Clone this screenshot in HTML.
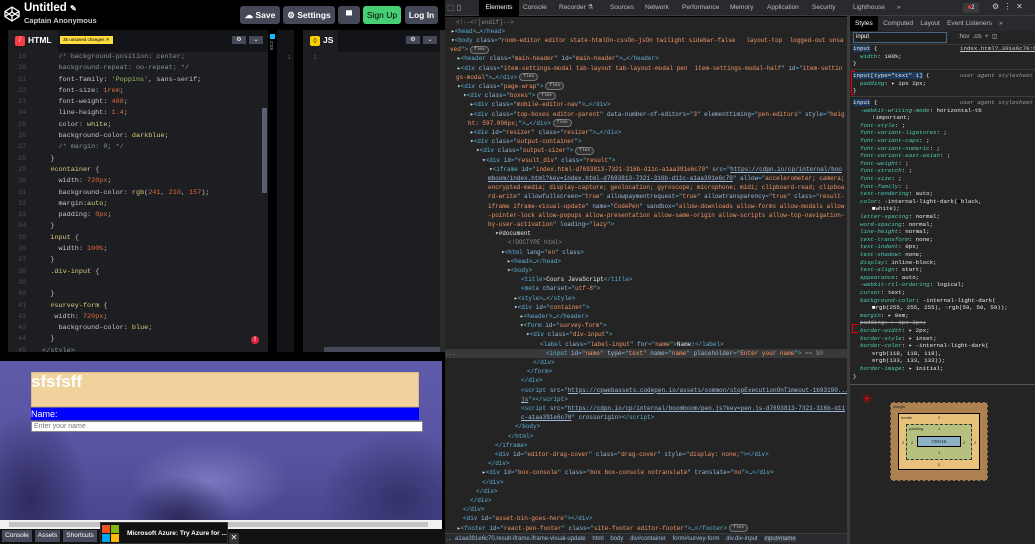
<!DOCTYPE html>
<html><head><meta charset="utf-8"><style>
*{margin:0;padding:0;box-sizing:border-box}
body{width:1035px;height:544px;overflow:hidden;background:#000;font-family:"Liberation Sans",sans-serif;position:relative}
.a{position:absolute}
.mono{font-family:"Liberation Mono",monospace}
.btn{position:absolute;top:6px;height:18px;background:#444857;color:#fff;font-size:8.5px;border-radius:3px;display:flex;align-items:center;justify-content:center;font-weight:bold}
.code{position:absolute;left:8px;top:52px;width:260px;height:300px;background:#1d1e22;font-family:"Liberation Mono",monospace;font-size:6.8px;color:#c5c8c6;overflow:hidden}
.code div{height:11.3px;line-height:11.3px;white-space:pre}
.code .ln{display:inline-block;width:26px;color:#4a4d55;text-align:left;padding-left:10px}
.k{color:#ddca7e}.o{color:#e2693d}.g{color:#a0c25f}.c{color:#8a8e99}
#el{position:absolute;left:445px;top:17px;width:402px;height:516px;background:#242424;overflow:hidden;font-family:"Liberation Mono",monospace;font-size:6px;color:#e8eaed}
#el div{position:absolute;height:9.2px;line-height:9.2px;white-space:pre}
.t{color:#5db0d7}.n{color:#9bbbdc}.v{color:#f29766}.u{color:#9bbbdc;text-decoration:underline}.cm{color:#898989}
.fl{display:inline-block;border:1px solid #777;border-radius:5px;font-size:4.5px;padding:0 3px;line-height:6px;color:#ccc;margin-left:2px;vertical-align:middle;background:#333}
#st{position:absolute;left:850px;top:45px;width:185px;height:499px;background:#242424;font-family:"Liberation Mono",monospace;font-size:5.8px;color:#e8eaed;overflow:hidden}
#st div{position:absolute;white-space:pre;height:7.6px;line-height:7.6px}
.p{color:#4ec9b0;font-style:italic}.pn{color:#4ec9b0}
.tab{position:absolute;top:0;height:16px;line-height:16px;font-size:6.5px;color:#bbb}
</style></head><body>
<!-- header -->
<div class="a" style="left:0;top:0;width:445px;height:30px;background:#000"></div>
<svg class="a" style="left:4px;top:6px" width="16" height="16" viewBox="0 0 16 16"><g fill="none" stroke="#fff" stroke-width="1.3"><path d="M8 1L15 5.5V10.5L8 15L1 10.5V5.5Z"/><path d="M1 5.5L8 10L15 5.5M8 1V6L1 10.5M8 6L15 10.5M8 10V15"/></g></svg>
<div class="a" style="left:24px;top:2px;color:#fff;font-size:11.5px;font-weight:bold">Untitled <span style="font-size:8px">✎</span></div>
<div class="a" style="left:24px;top:16px;color:#ccc;font-size:7.5px;font-weight:bold">Captain Anonymous</div>
<div class="btn" style="left:240px;width:40px">☁ Save</div>
<div class="btn" style="left:283px;width:52px">⚙ Settings</div>
<div class="btn" style="left:338px;width:22px">▀</div>
<div class="btn" style="left:363px;width:38px;background:#47cf73;color:#000;font-weight:normal">Sign Up</div>
<div class="btn" style="left:405px;width:33px">Log In</div>
<!-- editors -->
<div class="a" style="left:8px;top:30px;width:260px;height:22px;background:#131417"></div>
<div class="a" style="left:8px;top:30px;width:50px;height:22px;background:#1d1e22"></div>
<div class="a" style="left:15px;top:36px;width:10px;height:10px;background:#ff3c41;border-radius:2px;color:#fff;font-size:7px;text-align:center;line-height:10px">/</div>
<div class="a" style="left:28px;top:35px;color:#fff;font-size:8.5px;font-weight:bold">HTML</div>
<div class="a" style="left:60px;top:36px;background:#ffdd40;color:#000;font-size:4.5px;padding:1px 3px">35 unsaved changes ✕</div>
<div class="a" style="left:232px;top:36px;width:14px;height:8px;background:#444857;color:#fff;font-size:6px;text-align:center;line-height:8px">⚙</div>
<div class="a" style="left:249px;top:36px;width:14px;height:8px;background:#444857;color:#fff;font-size:6px;text-align:center;line-height:8px">⌄</div>
<div class="a" style="left:268px;top:30px;width:9px;height:322px;background:#000"></div>
<div class="a" style="left:270px;top:34px;width:5px;height:5px;background:#0ebeff"></div>
<div class="a" style="left:269px;top:41px;color:#aaa;font-size:4.5px;writing-mode:vertical-rl">CSS</div>
<div class="a" style="left:277px;top:30px;width:17px;height:322px;background:#131417"></div>
<div class="a" style="left:294px;top:30px;width:9px;height:322px;background:#000"></div>
<div class="a" style="left:303px;top:30px;width:137px;height:322px;background:#1d1e22"></div>
<div class="a" style="left:338px;top:30px;width:102px;height:22px;background:#131417"></div>
<div class="a" style="left:310px;top:36px;width:10px;height:10px;background:#fcd000;border-radius:2px;color:#000;font-size:5px;text-align:center;line-height:10px">()</div>
<div class="a" style="left:323px;top:35px;color:#fff;font-size:8.5px;font-weight:bold">JS</div>
<div class="a" style="left:406px;top:36px;width:14px;height:8px;background:#444857;color:#fff;font-size:6px;text-align:center;line-height:8px">⚙</div>
<div class="a" style="left:423px;top:36px;width:14px;height:8px;background:#444857;color:#fff;font-size:6px;text-align:center;line-height:8px">⌄</div>
<div class="a mono" style="left:287px;top:54px;color:#4a4d55;font-size:6.8px">1</div>
<div class="a mono" style="left:313px;top:54px;color:#4a4d55;font-size:6.8px">1</div>
<div class="a" style="left:440px;top:30px;width:5px;height:322px;background:#2c2c2c"></div>
<div class="a" style="left:324px;top:347px;width:116px;height:5px;background:#444857"></div>
<div class="code">
<div><span class="ln">19</span>      <span class="c">/* background-position: center;</span></div>
<div><span class="ln">20</span>      <span class="c">background-repeat: no-repeat; */</span></div>
<div><span class="ln">21</span>      font-family: <span class="g">'Poppins'</span>, sans-serif;</div>
<div><span class="ln">22</span>      font-size: <span class="o">1rem</span>;</div>
<div><span class="ln">23</span>      font-weight: <span class="o">400</span>;</div>
<div><span class="ln">24</span>      line-height: <span class="o">1.4</span>;</div>
<div><span class="ln">25</span>      color: <span class="k">white</span>;</div>
<div><span class="ln">26</span>      background-color: <span class="k">darkblue</span>;</div>
<div><span class="ln">27</span>      <span class="c">/* margin: 0; */</span></div>
<div><span class="ln">28</span>    }</div>
<div><span class="ln">29</span>    <span class="k">#container</span> {</div>
<div><span class="ln">30</span>      width: <span class="o">720px</span>;</div>
<div><span class="ln">31</span>      background-color: <span class="k">rgb</span>(<span class="o">241</span>, <span class="o">210</span>, <span class="o">157</span>);</div>
<div><span class="ln">32</span>      margin:<span class="k">auto</span>;</div>
<div><span class="ln">33</span>      padding: <span class="o">0px</span>;</div>
<div><span class="ln">34</span>    }</div>
<div><span class="ln">35</span>    <span class="k">input</span> {</div>
<div><span class="ln">36</span>      width: <span class="o">100%</span>;</div>
<div><span class="ln">37</span>    }</div>
<div><span class="ln">38</span>    <span class="k">.div-input</span> {</div>
<div><span class="ln">39</span></div>
<div><span class="ln">40</span>    }</div>
<div><span class="ln">41</span>    <span class="k">#survey-form</span> {</div>
<div><span class="ln">42</span>     width: <span class="o">720px</span>;</div>
<div><span class="ln">43</span>      background-color: <span class="k">blue</span>;</div>
<div><span class="ln">44</span>    }</div>
<div><span class="ln">45</span>  <span class="c">&lt;/style&gt;</span></div>
</div>
<div class="a" style="left:262px;top:108px;width:5px;height:85px;background:#5a5f73"></div>
<div class="a" style="left:251px;top:336px;width:8px;height:8px;border-radius:50%;background:#e0273c;color:#fff;font-size:6px;text-align:center;line-height:8px;font-weight:bold">!</div>
<!-- result -->
<div class="a" style="left:0;top:352px;width:445px;height:10px;background:#000"></div>
<div class="a" style="left:0;top:361px;width:442px;height:159px;background:radial-gradient(ellipse 60px 90px at 30px 140px,#2e2c5e 0,transparent 100%),radial-gradient(ellipse 55px 45px at 180px 160px,#2c2a58 0,transparent 100%),radial-gradient(ellipse 80px 70px at 400px 140px,#34326a 0,transparent 100%),radial-gradient(ellipse 80px 40px at 210px 120px,#7b78c0 0,transparent 100%),linear-gradient(180deg,#5f5bab,#5753a0 60%,#4a4690)"></div>
<div class="a" style="left:31px;top:372px;width:388px;height:35px;background:#f1d29d;border:1px solid #d8bb88"></div>
<div class="a" style="left:31px;top:372px;color:#fff;font-size:17px;font-weight:bold">sfsfsff</div>
<div class="a" style="left:31px;top:408px;width:388px;height:12px;background:#0000ff;color:#fff;font-size:9px;line-height:12px">Name:</div>
<div class="a" style="left:31px;top:421px;width:392px;height:11px;background:#fff;border:1px solid #888;color:#777;font-size:7px;line-height:9px;padding-left:2px">Enter your name</div>
<div class="a" style="left:0;top:520px;width:442px;height:9px;background:#f0f0f0"></div>
<div class="a" style="left:9px;top:522px;width:419px;height:5px;background:#c4c4c4"></div>
<div class="a" style="left:0;top:529px;width:445px;height:15px;background:#111"></div>
<div class="a" style="left:2px;top:530px;width:30px;height:12px;background:#444857;color:#fff;font-size:6.5px;text-align:center;line-height:12px">Console</div>
<div class="a" style="left:35px;top:530px;width:25px;height:12px;background:#444857;color:#fff;font-size:6.5px;text-align:center;line-height:12px">Assets</div>
<div class="a" style="left:63px;top:530px;width:34px;height:12px;background:#444857;color:#fff;font-size:6.5px;text-align:center;line-height:12px">Shortcuts</div>
<div class="a" style="left:100px;top:522px;width:128px;height:22px;background:#111;border:1px solid #333"></div>
<div class="a" style="left:102px;top:525px;width:8px;height:8px;background:#f25022"></div><div class="a" style="left:111px;top:525px;width:8px;height:8px;background:#7fba00"></div>
<div class="a" style="left:102px;top:534px;width:8px;height:8px;background:#00a4ef"></div><div class="a" style="left:111px;top:534px;width:8px;height:8px;background:#ffb900"></div>
<div class="a" style="left:127px;top:530px;color:#fff;font-size:6.5px;font-weight:bold">Microsoft Azure: Try Azure for ...</div>
<div class="a" style="left:229px;top:533px;width:10px;height:11px;background:#333;color:#fff;font-size:8px;text-align:center">✕</div>
<!-- devtools top -->
<div class="a" style="left:445px;top:0;width:590px;height:16px;background:#292a2d;border-bottom:1px solid #3c3c3c"></div>
<div class="a" style="left:447px;top:3px;color:#aaa;font-size:8px">⬚ ▯</div>
<div class="a" style="left:479px;top:0;width:40px;height:16px;background:#000;color:#fff;font-size:6.5px;text-align:center;line-height:16px">Elements</div>
<div class="tab" style="left:523px">Console</div>
<div class="tab" style="left:559px">Recorder ⚗</div>
<div class="tab" style="left:610px">Sources</div>
<div class="tab" style="left:645px">Network</div>
<div class="tab" style="left:682px">Performance</div>
<div class="tab" style="left:730px">Memory</div>
<div class="tab" style="left:767px">Application</div>
<div class="tab" style="left:812px">Security</div>
<div class="tab" style="left:853px">Lighthouse</div>
<div class="tab" style="left:897px">»</div>
<div class="a" style="left:963px;top:3px;width:16px;height:10px;background:#3a3a3a;color:#fff;font-size:6px;line-height:10px;text-align:center"><span style="color:#e33">■</span>2</div>
<div class="a" style="left:992px;top:2px;color:#ccc;font-size:8px;white-space:pre">⚙  ⋮  ✕</div>
<div id="el">
<div style="left:11px;top:0.6px" class="cm">&lt;!--&lt;![endif]--&gt;</div>
<div style="left:6px;top:9.8px">▸<span class="t">&lt;head&gt;</span>…<span class="t">&lt;/head&gt;</span></div>
<div style="left:6px;top:19px">▾<span class="t">&lt;body </span><span class="n">class</span><span class="t">="</span><span class="v">room-editor editor state-htmlOn-cssOn-jsOn twilight sidebar-false   layout-top  logged-out unsa</span></div>
<div style="left:5px;top:28.2px"><span class="v">ved</span><span class="t">"&gt;</span><span class="fl">flex</span></div>
<div style="left:12px;top:37.4px">▸<span class="t">&lt;header </span><span class="n">class</span><span class="t">="</span><span class="v">main-header</span><span class="t">" </span><span class="n">id</span><span class="t">="</span><span class="v">main-header</span><span class="t">"&gt;</span>…<span class="t">&lt;/header&gt;</span></div>
<div style="left:12px;top:46.6px">▸<span class="t">&lt;div </span><span class="n">class</span><span class="t">="</span><span class="v">item-settings-modal tab-layout tab-layout-modal pen  item-settings-modal-half</span><span class="t">" </span><span class="n">id</span><span class="t">="</span><span class="v">item-settin</span></div>
<div style="left:11px;top:55.8px"><span class="v">gs-modal</span><span class="t">"&gt;</span>…<span class="t">&lt;/div&gt;</span><span class="fl">flex</span></div>
<div style="left:12px;top:65px">▾<span class="t">&lt;div </span><span class="n">class</span><span class="t">="</span><span class="v">page-wrap</span><span class="t">"&gt;</span><span class="fl">flex</span></div>
<div style="left:18px;top:74.2px">▾<span class="t">&lt;div </span><span class="n">class</span><span class="t">="</span><span class="v">boxes</span><span class="t">"&gt;</span><span class="fl">flex</span></div>
<div style="left:25px;top:83.4px">▸<span class="t">&lt;div </span><span class="n">class</span><span class="t">="</span><span class="v">mobile-editor-nav</span><span class="t">"&gt;</span>…<span class="t">&lt;/div&gt;</span></div>
<div style="left:25px;top:92.6px">▸<span class="t">&lt;div </span><span class="n">class</span><span class="t">="</span><span class="v">top-boxes editor-parent</span><span class="t">" </span><span class="n">data-number-of-editors</span><span class="t">="</span><span class="v">3</span><span class="t">" </span><span class="n">elementtiming</span><span class="t">="</span><span class="v">pen-editors</span><span class="t">" </span><span class="n">style</span><span class="t">="</span><span class="v">heig</span></div>
<div style="left:23px;top:101.8px"><span class="v">ht: 597.006px;</span><span class="t">"&gt;</span>…<span class="t">&lt;/div&gt;</span><span class="fl">flex</span></div>
<div style="left:25px;top:111px">▸<span class="t">&lt;div </span><span class="n">id</span><span class="t">="</span><span class="v">resizer</span><span class="t">" </span><span class="n">class</span><span class="t">="</span><span class="v">resizer</span><span class="t">"&gt;</span>…<span class="t">&lt;/div&gt;</span></div>
<div style="left:25px;top:120.2px">▾<span class="t">&lt;div </span><span class="n">class</span><span class="t">="</span><span class="v">output-container</span><span class="t">"&gt;</span></div>
<div style="left:31px;top:129.4px">▾<span class="t">&lt;div </span><span class="n">class</span><span class="t">="</span><span class="v">output-sizer</span><span class="t">"&gt;</span><span class="fl">flex</span></div>
<div style="left:37px;top:138.6px">▾<span class="t">&lt;div </span><span class="n">id</span><span class="t">="</span><span class="v">result_div</span><span class="t">" </span><span class="n">class</span><span class="t">="</span><span class="v">result</span><span class="t">"&gt;</span></div>
<div style="left:44px;top:147.8px">▾<span class="t">&lt;iframe </span><span class="n">id</span><span class="t">="</span><span class="v">index.html-d7693813-7321-316b-d11c-a1aa391e6c70</span><span class="t">" </span><span class="n">src</span><span class="t">="</span><span class="u">https://cdpn.io/cp/internal/boo</span></div>
<div style="left:43px;top:157px"><span class="u">mboom/index.html?key=index.html-d7693813-7321-316b-d11c-a1aa391e6c70</span><span class="t">" </span><span class="n">allow</span><span class="t">="</span><span class="v">accelerometer; camera;</span></div>
<div style="left:43px;top:166.2px"><span class="v">encrypted-media; display-capture; geolocation; gyroscope; microphone; midi; clipboard-read; clipboa</span></div>
<div style="left:43px;top:175.4px"><span class="v">rd-write</span><span class="t">" </span><span class="n">allowfullscreen</span><span class="t">="</span><span class="v">true</span><span class="t">" </span><span class="n">allowpaymentrequest</span><span class="t">="</span><span class="v">true</span><span class="t">" </span><span class="n">allowtransparency</span><span class="t">="</span><span class="v">true</span><span class="t">" </span><span class="n">class</span><span class="t">="</span><span class="v">result-</span></div>
<div style="left:43px;top:184.6px"><span class="v">iframe iframe-visual-update</span><span class="t">" </span><span class="n">name</span><span class="t">="</span><span class="v">CodePen</span><span class="t">" </span><span class="n">sandbox</span><span class="t">="</span><span class="v">allow-downloads allow-forms allow-modals allow</span></div>
<div style="left:43px;top:193.8px"><span class="v">-pointer-lock allow-popups allow-presentation allow-same-origin allow-scripts allow-top-navigation-</span></div>
<div style="left:43px;top:203px"><span class="v">by-user-activation</span><span class="t">" </span><span class="n">loading</span><span class="t">="</span><span class="v">lazy</span><span class="t">"&gt;</span></div>
<div style="left:50px;top:212.2px">▾#document</div>
<div style="left:63px;top:221.4px"><span class="cm">&lt;!DOCTYPE html&gt;</span></div>
<div style="left:56px;top:230.6px">▾<span class="t">&lt;html </span><span class="n">lang</span><span class="t">="</span><span class="v">en</span><span class="t">" </span><span class="n">class</span><span class="t">&gt;</span></div>
<div style="left:62px;top:239.8px">▸<span class="t">&lt;head&gt;</span>…<span class="t">&lt;/head&gt;</span></div>
<div style="left:62px;top:249px">▾<span class="t">&lt;body&gt;</span></div>
<div style="left:76px;top:258.2px"><span class="t">&lt;title&gt;</span>Cours JavaScript<span class="t">&lt;/title&gt;</span></div>
<div style="left:76px;top:267.4px"><span class="t">&lt;meta </span><span class="n">charset</span><span class="t">="</span><span class="v">utf-8</span><span class="t">"&gt;</span></div>
<div style="left:69px;top:276.6px">▸<span class="t">&lt;style&gt;</span>…<span class="t">&lt;/style&gt;</span></div>
<div style="left:69px;top:285.8px">▾<span class="t">&lt;div </span><span class="n">id</span><span class="t">="</span><span class="v">container</span><span class="t">"&gt;</span></div>
<div style="left:75px;top:295px">▸<span class="t">&lt;header&gt;</span>…<span class="t">&lt;/header&gt;</span></div>
<div style="left:75px;top:304.2px">▾<span class="t">&lt;form </span><span class="n">id</span><span class="t">="</span><span class="v">survey-form</span><span class="t">"&gt;</span></div>
<div style="left:81px;top:313.4px">▾<span class="t">&lt;div </span><span class="n">class</span><span class="t">="</span><span class="v">div-input</span><span class="t">"&gt;</span></div>
<div style="left:95px;top:322.6px"><span class="t">&lt;label </span><span class="n">class</span><span class="t">="</span><span class="v">label-input</span><span class="t">" </span><span class="n">for</span><span class="t">="</span><span class="v">name</span><span class="t">"&gt;</span>Name:<span class="t">&lt;/label&gt;</span></div>
<div style="left:0;top:331.8px;width:402px;background:#393939"><span class="cm">...</span>                         <span class="t">&lt;input </span><span class="n">id</span><span class="t">="</span><span class="v">name</span><span class="t">" </span><span class="n">type</span><span class="t">="</span><span class="v">text</span><span class="t">" </span><span class="n">name</span><span class="t">="</span><span class="v">name</span><span class="t">" </span><span class="n">placeholder</span><span class="t">="</span><span class="v">Enter your name</span><span class="t">"&gt;</span> <span class="cm">== $0</span></div>
<div style="left:88px;top:341px"><span class="t">&lt;/div&gt;</span></div>
<div style="left:82px;top:350.2px"><span class="t">&lt;/form&gt;</span></div>
<div style="left:76px;top:359.4px"><span class="t">&lt;/div&gt;</span></div>
<div style="left:76px;top:368.6px"><span class="t">&lt;script </span><span class="n">src</span><span class="t">="</span><span class="u">https://cpwebassets.codepen.io/assets/common/stopExecutionOnTimeout-1b93190...</span></div>
<div style="left:76px;top:377.8px"><span class="u">js</span><span class="t">"&gt;&lt;/script&gt;</span></div>
<div style="left:76px;top:387px"><span class="t">&lt;script </span><span class="n">src</span><span class="t">="</span><span class="u">https://cdpn.io/cp/internal/boomboom/pen.js?key=pen.js-d7693813-7321-316b-d11</span></div>
<div style="left:76px;top:396.2px"><span class="u">c-a1aa391e6c70</span><span class="t">" </span><span class="n">crossorigin</span><span class="t">&gt;&lt;/script&gt;</span></div>
<div style="left:70px;top:405.4px"><span class="t">&lt;/body&gt;</span></div>
<div style="left:63px;top:414.6px"><span class="t">&lt;/html&gt;</span></div>
<div style="left:50px;top:423.8px"><span class="t">&lt;/iframe&gt;</span></div>
<div style="left:50px;top:433px"><span class="t">&lt;div </span><span class="n">id</span><span class="t">="</span><span class="v">editor-drag-cover</span><span class="t">" </span><span class="n">class</span><span class="t">="</span><span class="v">drag-cover</span><span class="t">" </span><span class="n">style</span><span class="t">="</span><span class="v">display: none;</span><span class="t">"&gt;&lt;/div&gt;</span></div>
<div style="left:43px;top:442.2px"><span class="t">&lt;/div&gt;</span></div>
<div style="left:37px;top:451.4px">▸<span class="t">&lt;div </span><span class="n">id</span><span class="t">="</span><span class="v">box-console</span><span class="t">" </span><span class="n">class</span><span class="t">="</span><span class="v">box box-console notranslate</span><span class="t">" </span><span class="n">translate</span><span class="t">="</span><span class="v">no</span><span class="t">"&gt;</span>…<span class="t">&lt;/div&gt;</span></div>
<div style="left:37px;top:460.6px"><span class="t">&lt;/div&gt;</span></div>
<div style="left:31px;top:469.8px"><span class="t">&lt;/div&gt;</span></div>
<div style="left:25px;top:479px"><span class="t">&lt;/div&gt;</span></div>
<div style="left:18px;top:488.2px"><span class="t">&lt;/div&gt;</span></div>
<div style="left:18px;top:497.4px"><span class="t">&lt;div </span><span class="n">id</span><span class="t">="</span><span class="v">asset-bin-goes-here</span><span class="t">"&gt;&lt;/div&gt;</span></div>
<div style="left:12px;top:506.6px">▸<span class="t">&lt;footer </span><span class="n">id</span><span class="t">="</span><span class="v">react-pen-footer</span><span class="t">" </span><span class="n">class</span><span class="t">="</span><span class="v">site-footer editor-footer</span><span class="t">"&gt;</span>…<span class="t">&lt;/footer&gt;</span><span class="fl">flex</span></div>
</div>
<div class="a" style="left:445px;top:533px;width:402px;height:11px;background:#292a2d;border-top:1px solid #3c3c3c;font-size:6px;line-height:10px;color:#9bbbdc;white-space:pre"> ...  a1aa391e6c70.result-iframe.iframe-visual-update    html    body    div#container    form#survey-form    div.div-input    <span style="background:#3a3a3a">input#name</span></div>
<div class="a" style="left:847px;top:16px;width:3px;height:528px;background:#3c3c3c"></div>
<!-- styles -->
<div class="a" style="left:850px;top:16px;width:185px;height:15px;background:#292a2d;font-size:6.5px;color:#bbb;line-height:15px;white-space:pre"><span style="background:#000;color:#fff;padding:4px 5px">Styles</span>   Computed    Layout    Event Listeners    »</div>
<div class="a" style="left:850px;top:31px;width:185px;height:14px;background:#242424;border-bottom:1px solid #3c3c3c"></div>
<div class="a" style="left:853px;top:32px;width:94px;height:11px;border:1px solid #4a6a8a;background:#1f1f1f;color:#fff;font-size:6px;line-height:9px;padding-left:2px">input</div>
<div class="a" style="left:958px;top:33px;color:#bbb;font-size:6px;white-space:pre">:hov  .cls  +  ◫</div>
<div id="st">
<div style="left:3px;top:0" ><span style="background:#1e3a5c">input</span> {</div>
<div style="left:110px;top:0;text-decoration:underline;color:#ccc">index.html?…391e6c70:63</div>
<div style="left:10px;top:7.6px"><span class="pn">width</span>: 100%;</div>
<div style="left:3px;top:15.2px">}</div>
<div style="left:0;top:24px;width:185px;height:1px;background:#3c3c3c"></div>
<div style="left:3px;top:27px"><span style="background:#1e3a5c">input[type="text" i]</span> {</div>
<div style="left:110px;top:27px;color:#999;font-style:italic">user agent stylesheet</div>
<div style="left:10px;top:34.6px"><span class="p">padding</span>: ▸ 1px 2px;</div>
<div style="left:3px;top:42.2px">}</div>
<div style="left:1px;top:26px;width:4px;height:24px;border:1px solid #e00;border-right:none"></div>
<div style="left:0;top:51px;width:185px;height:1px;background:#3c3c3c"></div>
<div style="left:3px;top:54px"><span style="background:#1e3a5c">input</span> {</div>
<div style="left:110px;top:54px;color:#999;font-style:italic">user agent stylesheet</div>
<div style="left:10px;top:61.6px"><span class="p">-webkit-writing-mode</span>: horizontal-tb</div>
<div style="left:22px;top:69.2px">!important;</div>
<div style="left:10px;top:76.8px"><span class="p">font-style</span>: ;</div>
<div style="left:10px;top:84.4px"><span class="p">font-variant-ligatures</span>: ;</div>
<div style="left:10px;top:92px"><span class="p">font-variant-caps</span>: ;</div>
<div style="left:10px;top:99.6px"><span class="p">font-variant-numeric</span>: ;</div>
<div style="left:10px;top:107.2px"><span class="p">font-variant-east-asian</span>: ;</div>
<div style="left:10px;top:114.8px"><span class="p">font-weight</span>: ;</div>
<div style="left:10px;top:122.4px"><span class="p">font-stretch</span>: ;</div>
<div style="left:10px;top:130px"><span class="p">font-size</span>: ;</div>
<div style="left:10px;top:137.6px"><span class="p">font-family</span>: ;</div>
<div style="left:10px;top:145.2px"><span class="p">text-rendering</span>: auto;</div>
<div style="left:10px;top:152.8px"><span class="p">color</span>: -internal-light-dark(<span style="color:#000">■</span>black,</div>
<div style="left:22px;top:160.4px"><span style="color:#fff">■</span>white);</div>
<div style="left:10px;top:168px"><span class="p">letter-spacing</span>: normal;</div>
<div style="left:10px;top:175.6px"><span class="p">word-spacing</span>: normal;</div>
<div style="left:10px;top:183.2px"><span class="p">line-height</span>: normal;</div>
<div style="left:10px;top:190.8px"><span class="p">text-transform</span>: none;</div>
<div style="left:10px;top:198.4px"><span class="p">text-indent</span>: 0px;</div>
<div style="left:10px;top:206px"><span class="p">text-shadow</span>: none;</div>
<div style="left:10px;top:213.6px"><span class="p">display</span>: inline-block;</div>
<div style="left:10px;top:221.2px"><span class="p">text-align</span>: start;</div>
<div style="left:10px;top:228.8px"><span class="p">appearance</span>: auto;</div>
<div style="left:10px;top:236.4px"><span class="p">-webkit-rtl-ordering</span>: logical;</div>
<div style="left:10px;top:244px"><span class="p">cursor</span>: text;</div>
<div style="left:10px;top:251.6px"><span class="p">background-color</span>: -internal-light-dark(</div>
<div style="left:22px;top:259.2px"><span style="color:#fff">■</span>rgb(255, 255, 255), <span style="color:#3b3b3b">■</span>rgb(59, 59, 59));</div>
<div style="left:10px;top:266.8px"><span class="p">margin</span>: ▸ 0em;</div>
<div style="left:10px;top:274.4px;text-decoration:line-through;color:#aaa">padding: ▸ 1px 2px;</div>
<div style="left:10px;top:282px"><span class="p">border-width</span>: ▸ 2px;</div>
<div style="left:2px;top:279px;width:6px;height:9px;border:1px solid #e00;border-right:none"></div>
<div style="left:10px;top:289.6px"><span class="p">border-style</span>: ▸ inset;</div>
<div style="left:10px;top:297.2px"><span class="p">border-color</span>: ▸ -internal-light-dark(</div>
<div style="left:22px;top:304.8px"><span style="color:#767676">■</span>rgb(118, 118, 118),</div>
<div style="left:22px;top:312.4px"><span style="color:#858585">■</span>rgb(133, 133, 133));</div>
<div style="left:10px;top:320px"><span class="p">border-image</span>: ▸ initial;</div>
<div style="left:3px;top:327.6px">}</div>
<div style="left:0;top:339px;width:185px;height:1px;background:#555"></div>
<div style="left:12px;top:346px;color:#e00;font-size:16px;line-height:16px;height:16px">✳</div>
</div>
<!-- box model -->
<div class="a" style="left:890px;top:402px;width:98px;height:79px;background:#ad8150;border:1px dashed #333"></div>
<div class="a" style="left:893px;top:404px;font-size:4px;color:#222">margin</div>
<div class="a" style="left:898px;top:413px;width:82px;height:57px;background:#e8c27a;border:1px solid #000"></div>
<div class="a" style="left:901px;top:415px;font-size:4px;color:#222">border</div>
<div class="a" style="left:906px;top:424px;width:66px;height:36px;background:#b6c17f;border:1px dashed #333"></div>
<div class="a" style="left:909px;top:426px;font-size:4px;color:#222">padding</div>
<div class="a" style="left:917px;top:436px;width:44px;height:11px;background:#8cb1c5;border:1px solid #000;font-size:4.5px;text-align:center;line-height:9px;color:#222">720×16</div>
<div class="a" style="left:938px;top:415px;font-size:4px;color:#222">2</div>
<div class="a" style="left:938px;top:426px;font-size:4px;color:#222">1</div>
<div class="a" style="left:938px;top:450px;font-size:4px;color:#222">1</div>
<div class="a" style="left:938px;top:462px;font-size:4px;color:#222">2</div>
<div class="a" style="left:902px;top:440px;font-size:4px;color:#222">2</div>
<div class="a" style="left:911px;top:440px;font-size:4px;color:#222">2</div>
<div class="a" style="left:963px;top:440px;font-size:4px;color:#222">2</div>
<div class="a" style="left:974px;top:440px;font-size:4px;color:#222">2</div>
</body></html>
